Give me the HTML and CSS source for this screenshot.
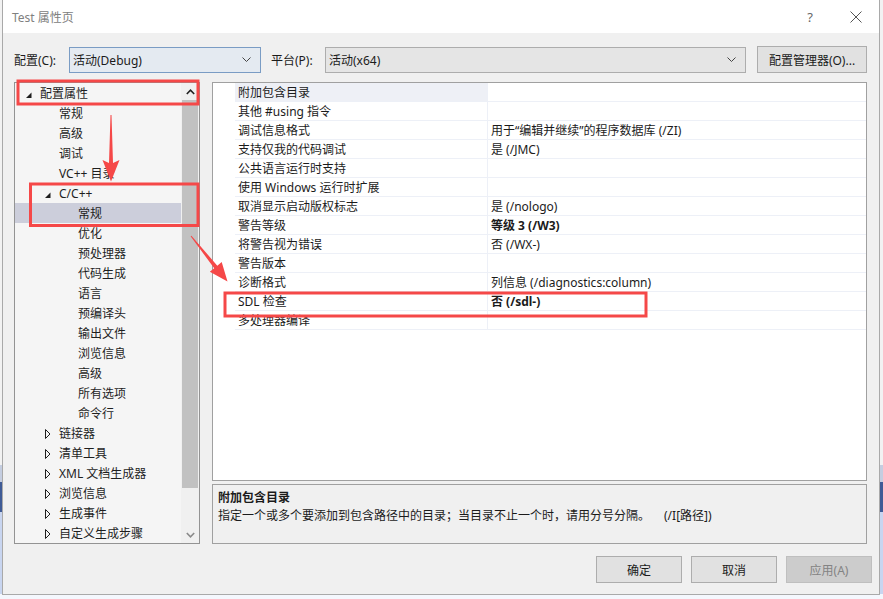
FILE: index.html
```html
<!DOCTYPE html>
<html lang="zh-CN">
<head>
    <meta charset="UTF-8">
    <title>Test 属性页</title>
    <link rel="stylesheet" href="styles.css">
</head>
<body>
    <div class="dialog">
        <div class="titlebar">
            <span class="title">Test 属性页</span>
            <span class="help">?</span>
            <svg class="close" width="12" height="12" viewBox="0 0 12 12">
                <path d="M0.5 0.5 L11.5 11.5 M11.5 0.5 L0.5 11.5" stroke="#555" stroke-width="1" fill="none"/>
            </svg>
        </div>

        <div class="config-row">
            <label class="label-config">配置(C):</label>
            <div class="combo combo-config">
                <span>活动(Debug)</span>
                <svg class="chevron" width="9" height="5" viewBox="0 0 9 5"><path d="M0.5 0.5 L4.5 4.5 L8.5 0.5" stroke="#444" fill="none"/></svg>
            </div>
            <label class="label-platform">平台(P):</label>
            <div class="combo combo-platform">
                <span>活动(x64)</span>
                <svg class="chevron" width="9" height="5" viewBox="0 0 9 5"><path d="M0.5 0.5 L4.5 4.5 L8.5 0.5" stroke="#444" fill="none"/></svg>
            </div>
            <button class="btn btn-manager">配置管理器(O)...</button>
        </div>

        <div class="main">
            <div class="tree">
                <ul class="tree-items">
                    <li class="lvl0"><span class="arrow"><svg width="16" height="20"><polygon points="7.5,8.5 7.5,14 2,14" fill="#1e1e1e"/></svg></span>配置属性</li>
                    <li class="lvl1"><span class="arrow"></span>常规</li>
                    <li class="lvl1"><span class="arrow"></span>高级</li>
                    <li class="lvl1"><span class="arrow"></span>调试</li>
                    <li class="lvl1"><span class="arrow"></span>VC++ 目录</li>
                    <li class="lvl1"><span class="arrow"><svg width="16" height="20"><polygon points="7.5,8.5 7.5,14 2,14" fill="#1e1e1e"/></svg></span>C/C++</li>
                    <li class="lvl2 selected"><span class="arrow"></span>常规</li>
                    <li class="lvl2"><span class="arrow"></span>优化</li>
                    <li class="lvl2"><span class="arrow"></span>预处理器</li>
                    <li class="lvl2"><span class="arrow"></span>代码生成</li>
                    <li class="lvl2"><span class="arrow"></span>语言</li>
                    <li class="lvl2"><span class="arrow"></span>预编译头</li>
                    <li class="lvl2"><span class="arrow"></span>输出文件</li>
                    <li class="lvl2"><span class="arrow"></span>浏览信息</li>
                    <li class="lvl2"><span class="arrow"></span>高级</li>
                    <li class="lvl2"><span class="arrow"></span>所有选项</li>
                    <li class="lvl2"><span class="arrow"></span>命令行</li>
                    <li class="lvl1"><span class="arrow"><svg width="16" height="20"><polygon points="2.5,5.5 2.5,14.5 7,10" fill="none" stroke="#1e1e1e"/></svg></span>链接器</li>
                    <li class="lvl1"><span class="arrow"><svg width="16" height="20"><polygon points="2.5,5.5 2.5,14.5 7,10" fill="none" stroke="#1e1e1e"/></svg></span>清单工具</li>
                    <li class="lvl1"><span class="arrow"><svg width="16" height="20"><polygon points="2.5,5.5 2.5,14.5 7,10" fill="none" stroke="#1e1e1e"/></svg></span>XML 文档生成器</li>
                    <li class="lvl1"><span class="arrow"><svg width="16" height="20"><polygon points="2.5,5.5 2.5,14.5 7,10" fill="none" stroke="#1e1e1e"/></svg></span>浏览信息</li>
                    <li class="lvl1"><span class="arrow"><svg width="16" height="20"><polygon points="2.5,5.5 2.5,14.5 7,10" fill="none" stroke="#1e1e1e"/></svg></span>生成事件</li>
                    <li class="lvl1"><span class="arrow"><svg width="16" height="20"><polygon points="2.5,5.5 2.5,14.5 7,10" fill="none" stroke="#1e1e1e"/></svg></span>自定义生成步骤</li>
                </ul>
                <div class="scrollbar">
                    <div class="sb-btn">
                        <svg width="9" height="6" viewBox="0 0 9 6"><path d="M0.8 5 L4.5 1.2 L8.2 5" stroke="#222" stroke-width="1.6" fill="none"/></svg>
                    </div>
                    <div class="sb-thumb"></div>
                    <div class="sb-track"></div>
                    <div class="sb-btn">
                        <svg width="9" height="6" viewBox="0 0 9 6"><path d="M0.8 1 L4.5 4.8 L8.2 1" stroke="#8a8a8a" stroke-width="1.6" fill="none"/></svg>
                    </div>
                </div>
            </div>

            <div class="right">
                <div class="grid">
                    <div class="row current"><span class="name">附加包含目录</span><span class="value"></span></div>
                    <div class="row"><span class="name">其他 #using 指令</span><span class="value"></span></div>
                    <div class="row"><span class="name">调试信息格式</span><span class="value">用于“编辑并继续”的程序数据库 (/ZI)</span></div>
                    <div class="row"><span class="name">支持仅我的代码调试</span><span class="value">是 (/JMC)</span></div>
                    <div class="row"><span class="name">公共语言运行时支持</span><span class="value"></span></div>
                    <div class="row"><span class="name">使用 Windows 运行时扩展</span><span class="value"></span></div>
                    <div class="row"><span class="name">取消显示启动版权标志</span><span class="value">是 (/nologo)</span></div>
                    <div class="row"><span class="name">警告等级</span><span class="value bold">等级 3 (/W3)</span></div>
                    <div class="row"><span class="name">将警告视为错误</span><span class="value">否 (/WX-)</span></div>
                    <div class="row"><span class="name">警告版本</span><span class="value"></span></div>
                    <div class="row"><span class="name">诊断格式</span><span class="value">列信息 (/diagnostics:column)</span></div>
                    <div class="row"><span class="name">SDL 检查</span><span class="value bold">否 (/sdl-)</span></div>
                    <div class="row"><span class="name">多处理器编译</span><span class="value"></span></div>
                </div>
                <div class="desc">
                    <div class="desc-title">附加包含目录</div>
                    <div class="desc-text">指定一个或多个要添加到包含路径中的目录；当目录不止一个时，请用分号分隔。<span class="switch">(/I[路径])</span></div>
                </div>
            </div>
        </div>

        <div class="buttons">
            <button class="btn">确定</button>
            <button class="btn">取消</button>
            <button class="btn disabled">应用(A)</button>
        </div>
    </div>

    <!-- screenshot markup drawn over the dialog -->
    <svg class="annotations" width="883" height="599" viewBox="0 0 883 599">
        <g fill="none" stroke="#f54848" stroke-width="3">
            <rect x="18" y="81" width="180" height="23"/>
            <rect x="30.5" y="184" width="167.5" height="41.5"/>
            <rect x="225" y="293" width="421" height="23"/>
        </g>
        <g fill="#f54848">
            <polygon points="110.5,115 111.5,115 113,163 119.5,160 111,181.5 102.5,160 109,163"/>
            <polygon points="191.4,235.7 217.3,265.7 221.7,262 227.5,281.5 209.8,271.8 214.2,268.2 190.6,236.3"/>
        </g>
    </svg>
</body>
</html>
```

FILE: styles.css
```css
* {
    box-sizing: border-box;
}

body {
    margin: 0;
    width: 883px;
    height: 599px;
    overflow: hidden;
    font-family: 'Noto Sans', 'Noto Sans CJK SC', sans-serif;
    font-size: 12px;
    color: #1b1b1b;
    background: linear-gradient(to bottom, #f2f2f2 0, #f2f2f2 465px, #c4cde0 465px, #c4cde0 482px, #3f5b96 482px, #3f5b96 512px, #c8d5f0 512px, #c8d5f0 594px, #f4f7fd 594px);
    position: relative;
}

.dialog {
    margin-left: 2px;
    width: 878px;
    height: 595px;
    background-color: #f0f0f0;
    border: 1px solid #a9a9a9;
    border-top: none;
    display: flex;
    flex-direction: column;
}

/* title bar */
.titlebar {
    height: 33px;
    background-color: white;
    display: flex;
    align-items: center;
    padding-left: 9px;
    flex-shrink: 0;
}

.title {
    color: #808080;
    font-size: 12px;
    flex-grow: 1;
}

.help {
    color: #666;
    font-size: 13px;
    margin-right: 37px;
}

.close {
    margin-right: 17px;
}

/* configuration row */
.config-row {
    height: 49px;
    display: flex;
    align-items: center;
    padding: 4px 0 0 11px;
    flex-shrink: 0;
}

.config-row label {
    color: #1b1b1b;
}

.label-config {
    width: 55px;
}

.label-platform {
    width: 54px;
    margin-left: 10px;
}

.combo {
    height: 26px;
    display: flex;
    align-items: center;
    justify-content: space-between;
    padding: 0 9px 0 3px;
    border: 1px solid #adadad;
    background-color: #e5e5e5;
}

.combo-config {
    width: 192px;
    background-color: #e4eaf1;
    border-color: #7a9cc4;
}

.combo-platform {
    width: 421px;
}

.btn {
    font-family: inherit;
    font-size: 12px;
    color: #1b1b1b;
    height: 27px;
    border: 1px solid #adadad;
    background-color: #e1e1e1;
    padding: 0;
}

.btn-manager {
    width: 110px;
    margin-left: 11px;
}

/* main area */
.main {
    height: 462px;
    display: flex;
    gap: 12px;
    padding-left: 11px;
    flex-shrink: 0;
}

.tree {
    width: 186px;
    border: 1px solid #939393;
    background-color: #f5f5f5;
    display: flex;
}

.tree-items {
    list-style: none;
    margin: 0;
    padding: 0;
    width: 166px;
    overflow: hidden;
}

.tree-items li {
    height: 20px;
    line-height: 18px;
    padding-top: 2px;
    display: flex;
    align-items: flex-start;
    white-space: nowrap;
    color: #1e1e1e;
}

.tree-items .arrow {
    width: 16px;
    height: 18px;
    flex-shrink: 0;
}

.tree-items .arrow svg {
    display: block;
    margin-top: -1px;
}

.lvl0 {
    padding-left: 9px;
}

.lvl1 {
    padding-left: 28px;
}

.lvl2 {
    padding-left: 47px;
}

.tree-items .selected {
    background-color: #cccedb;
}

.scrollbar {
    width: 18px;
    background-color: #f0f0f0;
    display: flex;
    flex-direction: column;
}

.sb-btn {
    height: 17px;
    display: flex;
    align-items: center;
    justify-content: center;
}

.sb-thumb {
    height: 388px;
    margin: 0 1px;
    background-color: #c1c1c1;
}

.sb-track {
    flex-grow: 1;
}

.right {
    width: 655px;
    display: flex;
    flex-direction: column;
    gap: 3px;
}

/* property grid */
.grid {
    height: 399px;
    border: 1px solid #a0a0a0;
    background-color: white;
    padding-left: 22px;
}

.row {
    height: 19px;
    display: flex;
    border-bottom: 1px solid #edf0f7;
    white-space: nowrap;
}

.row .name {
    width: 252px;
    padding: 2px 0 0 3px;
    line-height: 16px;
}

.row .value {
    flex-grow: 1;
    padding: 2px 0 0 3px;
    line-height: 16px;
    border-left: 1px solid #edf0f7;
}

.row.current .name {
    background-color: #eef0f6;
}

.bold {
    font-weight: bold;
}

/* description */
.desc {
    height: 60px;
    border: 1px solid #a0a0a0;
    background-color: #f0f0f0;
    padding: 4px 5px;
    line-height: 18px;
}

.desc-title {
    font-weight: bold;
}

.switch {
    margin-left: 14px;
}

/* bottom buttons */
.buttons {
    margin-top: 12px;
    display: flex;
    justify-content: flex-end;
    gap: 9px;
    padding-right: 7px;
}

.buttons .btn {
    width: 86px;
}

.buttons .disabled {
    background-color: #cccccc;
    border-color: #bfbfbf;
    color: #838383;
}

.annotations {
    position: absolute;
    left: 0;
    top: 0;
    pointer-events: none;
}
```
